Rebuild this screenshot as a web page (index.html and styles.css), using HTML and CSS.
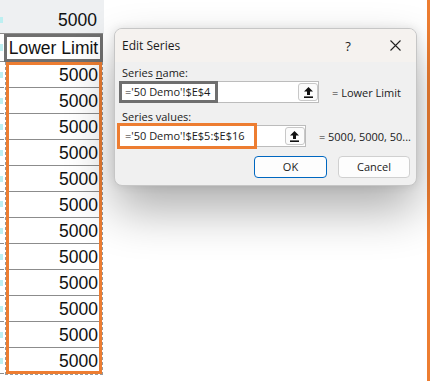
FILE: index.html
```html
<!DOCTYPE html>
<html lang="en">
<head>
    <meta charset="UTF-8">
    <title>Edit Series</title>
    <link rel="stylesheet" href="styles.css">
</head>
<body>
    <div class="screen">
        <div class="sheet">
            <div class="row row-top"><span class="strip"></span><span class="cell">5000</span></div>
            <div class="row row-head"><span class="strip"></span><span class="cell head">Lower Limit</span></div>
            <div class="range">
                <div class="strips">
                    <span class="strip"></span><span class="strip"></span><span class="strip"></span>
                    <span class="strip"></span><span class="strip"></span><span class="strip"></span>
                    <span class="strip"></span><span class="strip"></span><span class="strip"></span>
                    <span class="strip"></span><span class="strip"></span><span class="strip"></span>
                </div>
                <div class="marquee">
                    <div class="values">
                        <span class="val">5000</span><span class="val">5000</span><span class="val">5000</span>
                        <span class="val">5000</span><span class="val">5000</span><span class="val">5000</span>
                        <span class="val">5000</span><span class="val">5000</span><span class="val">5000</span>
                        <span class="val">5000</span><span class="val">5000</span><span class="val">5000</span>
                    </div>
                </div>
            </div>
        </div>

        <div class="canvas">
            <div class="dialog">
                <div class="titlebar">
                    <span class="title">Edit Series</span>
                    <span class="tb-btn help">?</span>
                    <span class="tb-btn close">
                        <svg width="11" height="11" viewBox="0 0 11 11"><path d="M0.5 0.5 L10.5 10.5 M10.5 0.5 L0.5 10.5" stroke="#222" stroke-width="1.1" fill="none"/></svg>
                    </span>
                </div>
                <div class="body">
                    <div class="label">Series <u>n</u>ame:</div>
                    <div class="line">
                        <div class="field">
                            <span class="ref ref-name">='50 Demo'!$E$4</span>
                            <span class="pick"><svg width="9" height="11" viewBox="0 0 9 11"><path d="M4.5 0 L9 4.6 H6 V8 H3 V4.6 H0 Z" fill="#111"/><rect x="0" y="9.4" width="9" height="1.6" fill="#111"/></svg></span>
                        </div>
                        <span class="result">= Lower Limit</span>
                    </div>
                    <div class="label label-2">Series values:</div>
                    <div class="line">
                        <div class="field">
                            <span class="ref ref-values">='50 Demo'!$E$5:$E$16</span>
                            <span class="pick"><svg width="9" height="11" viewBox="0 0 9 11"><path d="M4.5 0 L9 4.6 H6 V8 H3 V4.6 H0 Z" fill="#111"/><rect x="0" y="9.4" width="9" height="1.6" fill="#111"/></svg></span>
                        </div>
                        <span class="result">= 5000, 5000, 50...</span>
                    </div>
                    <div class="buttons">
                        <span class="btn btn-ok">OK</span>
                        <span class="btn">Cancel</span>
                    </div>
                </div>
            </div>
        </div>
    </div>
</body>
</html>
```

FILE: styles.css
```css
*{
    margin: 0px;
    padding: 0px;
    box-sizing: border-box;
}
body{
    background-color: white;
    width: 430px;
    height: 381px;
    overflow: hidden;
}
.screen{
    display: flex;
    height: 381px;
}

/* spreadsheet column */
.sheet{
    width: 104px;
    font-family: "Liberation Sans", Arial, sans-serif;
    font-size: 17.5px;
    color: #111;
}
.row{
    display: flex;
}
.strip{
    display: block;
    width: 4px;
    height: 26px;
    border-bottom: 1px solid #8c8c8c;
    background: linear-gradient(#fff 0 38%, #bdeff1 38% 62%, #fff 62%) no-repeat;
    background-size: 3px 100%;
}
.cell{
    width: 99px;
    text-align: right;
    padding-right: 6px;
    line-height: 26px;
}
.row-top{
    background-color: #eef0f2;
    height: 34px;
    align-items: flex-end;
}
.row-top .strip{
    background: linear-gradient(#eef0f2 0 38%, #bdeff1 38% 62%, #eef0f2 62%) no-repeat;
    background-size: 3px 100%;
}
.row-top .cell{
    border-bottom: 1px solid #8c8c8c;
}
.row-head{
    height: 28px;
}
.row-head .strip{
    height: 28px;
}
.head{
    text-align: center;
    padding-right: 0px;
    line-height: 28px;
    background-color: white;
    outline: 3px solid #6f6f6f;
    outline-offset: -3px;
}
.range{
    display: flex;
}
.marquee{
    margin-left: 1px;
    width: 98px;
    border: 1px dashed #9a9a9a;
    border-top: none;
}
.values{
    display: flex;
    flex-direction: column;
    outline: 3px solid #ed7d31;
    outline-offset: -3px;
}
.val{
    display: block;
    height: 26px;
    line-height: 26px;
    text-align: right;
    padding-right: 4px;
    border-bottom: 1px solid #8c8c8c;
}
.val:last-child{
    border-bottom: none;
}

/* free area with the dialog */
.canvas{
    flex: 1;
    position: relative;
    border-right: 3px solid #ed7d31;
}
.dialog{
    position: absolute;
    left: 10px;
    top: 28px;
    width: 303px;
    background-color: #f0f0f0;
    border: 1px solid #c6c6c6;
    border-radius: 8px;
    overflow: hidden;
    box-shadow: 0 24px 48px rgba(0, 0, 0, 0.32), 0 0 10px rgba(0, 0, 0, 0.1);
    font-family: "Open Sans", sans-serif;
    font-size: 11px;
    color: #1b1b1b;
}
.titlebar{
    display: flex;
    align-items: center;
    height: 33px;
    padding-left: 7px;
    background-color: #f5f2ef;
}
.title{
    flex: 1;
    font-size: 12px;
}
.tb-btn{
    display: flex;
    justify-content: center;
    align-items: center;
    height: 33px;
}
.help{
    width: 52px;
    font-size: 13px;
}
.close{
    width: 42px;
}
.body{
    padding: 0px 5px 7px 4px;
}
.label{
    padding-top: 2px;
    padding-left: 3px;
    line-height: 17px;
}
.label-2{
    padding-top: 5px;
}
.line{
    display: flex;
    align-items: center;
    height: 22px;
}
.field{
    display: flex;
    align-items: center;
    width: 200px;
    height: 22px;
    background-color: white;
    border: 1px solid #bcbcbc;
}
.ref{
    display: block;
    height: 20px;
    line-height: 20px;
    padding-left: 5px;
    white-space: nowrap;
}
.ref-name{
    width: 97px;
    outline: 3px solid #6f6f6f;
    outline-offset: -2px;
}
.ref-values{
    width: 134px;
    outline: 3px solid #ed7d31;
}
.pick{
    margin-left: auto;
    margin-right: 0px;
    width: 20px;
    height: 18px;
    display: flex;
    justify-content: center;
    align-items: center;
    background-color: #fbfbfb;
    border: 1px solid #c8c8c8;
    border-radius: 3px;
}
.result{
    margin-left: 13px;
    white-space: nowrap;
}
.buttons{
    display: flex;
    justify-content: flex-end;
    gap: 11px;
    margin-top: 9px;
    margin-right: 1px;
}
.btn{
    width: 72px;
    height: 22px;
    line-height: 20px;
    text-align: center;
    background-color: #fdfdfd;
    border: 1px solid #d0d0d0;
    border-radius: 4px;
}
.btn-ok{
    width: 73px;
    border-color: #0067c0;
}
```
